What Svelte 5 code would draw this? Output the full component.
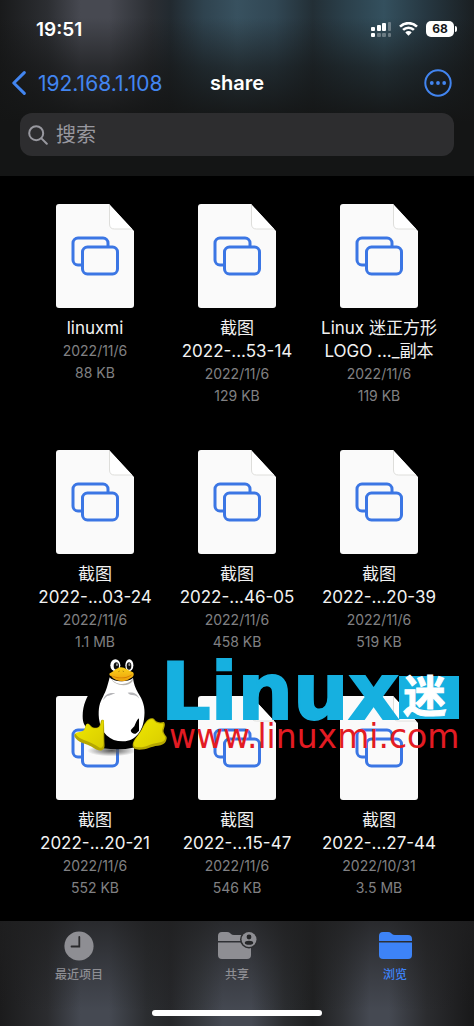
<script>
  let search = $state('');
  let activeTab = $state('browse');

  const files = [
    { name: ['linuxmi'], date: '2022/11/6', size: '88 KB' },
    { name: ['截图', '2022-...53-14'], date: '2022/11/6', size: '129 KB' },
    { name: ['Linux 迷正方形', 'LOGO ..._副本'], date: '2022/11/6', size: '119 KB' },
    { name: ['截图', '2022-...03-24'], date: '2022/11/6', size: '1.1 MB' },
    { name: ['截图', '2022-...46-05'], date: '2022/11/6', size: '458 KB' },
    { name: ['截图', '2022-...20-39'], date: '2022/11/6', size: '519 KB' },
    { name: ['截图', '2022-...20-21'], date: '2022/11/6', size: '552 KB' },
    { name: ['截图', '2022-...15-47'], date: '2022/11/6', size: '546 KB' },
    { name: ['截图', '2022-...27-44'], date: '2022/10/31', size: '3.5 MB' }
  ];

  const tabs = [
    { id: 'recents', label: '最近项目' },
    { id: 'shared', label: '共享' },
    { id: 'browse', label: '浏览' }
  ];
</script>

<div class="screen">
  <header>
    <div class="status">
      <span class="time">19:51</span>
      <div class="indicators">
        <svg width="20" height="15" viewBox="0 0 20 15" fill="#fff" aria-hidden="true">
          <rect x="0" y="5" width="4" height="4" rx="1" />
          <rect x="6" y="3" width="4" height="6" rx="1" />
          <rect x="11" y="1" width="4" height="8" rx="1" />
          <rect x="17" y="0" width="3" height="9" rx="1" opacity=".3" />
          <rect x="0" y="11" width="4" height="4" rx="1" />
          <g opacity=".3">
            <rect x="6" y="11" width="4" height="4" rx="1" />
            <rect x="11" y="11" width="4" height="4" rx="1" />
            <rect x="17" y="11" width="3" height="4" rx="1" />
          </g>
        </svg>
        <svg width="19" height="14" viewBox="0 0 19 14" aria-hidden="true">
          <g fill="none" stroke="#fff" stroke-width="2.6">
            <path d="M1 4.6a12.2 12.2 0 0 1 17 0" />
            <path d="M4.1 7.9a7.7 7.7 0 0 1 10.8 0" />
          </g>
          <path d="M6.3 10.4a4.6 4.6 0 0 1 6.4 0L9.5 13.7z" fill="#fff" />
        </svg>
        <span class="battery">68</span>
      </div>
    </div>

    <nav>
      <button class="back">
        <svg width="14" height="24" viewBox="0 0 14 24" aria-hidden="true">
          <path d="M12.3 1.6 1.8 12l10.5 10.4" fill="none" stroke="currentColor" stroke-width="3" stroke-linecap="round" stroke-linejoin="round" />
        </svg>
        192.168.1.108
      </button>
      <h1>share</h1>
      <button class="more" aria-label="更多">
        <svg width="28" height="28" viewBox="0 0 28 28" fill="currentColor" aria-hidden="true">
          <circle cx="14" cy="14" r="12.7" fill="none" stroke="currentColor" stroke-width="2" />
          <circle cx="7.8" cy="14" r="1.9" />
          <circle cx="14" cy="14" r="1.9" />
          <circle cx="20.2" cy="14" r="1.9" />
        </svg>
      </button>
    </nav>

    <label class="search">
      <svg width="20" height="20" viewBox="0 0 20 20" fill="none" stroke="currentColor" stroke-width="2" stroke-linecap="round" aria-hidden="true">
        <circle cx="8.2" cy="8.2" r="7" />
        <path d="m13.4 13.4 5.4 5.4" />
      </svg>
      <input type="text" placeholder="搜索" aria-label="搜索" bind:value={search} />
    </label>
  </header>

  <main>
    <div class="files">
      {#each files as file}
        <button class="file">
          <svg class="thumb" width="78" height="104" viewBox="0 0 78 104" aria-hidden="true">
            <path d="M3 0h50l25 27v74a3 3 0 0 1-3 3H3a3 3 0 0 1-3-3V3a3 3 0 0 1 3-3z" fill="#fafafa" />
            <path d="M53 0v20q0 5 5 5h18l2 2z" fill="#fff" />
            <path d="M53.5 1v19q0 5 5 5H76" fill="none" stroke="#dededb" stroke-width="1" />
            <g fill="#fafafa" stroke="#3b76e4" stroke-width="3">
              <rect x="17" y="34" width="35" height="27" rx="5" />
              <rect x="26.5" y="43" width="35" height="27" rx="5" />
            </g>
          </svg>
          {#each file.name as line}
            <span class="name">{line}</span>
          {/each}
          <span class="meta">{file.date}</span>
          <span class="meta">{file.size}</span>
        </button>
      {/each}
    </div>

    <div class="watermark">
      <svg width="110" height="110" viewBox="0 0 330 330" aria-hidden="true">
        <defs>
          <linearGradient id="foot" x1="0" y1="0" x2="1" y2="1">
            <stop offset="0" stop-color="#f0e800" />
            <stop offset="1" stop-color="#d8cc00" />
          </linearGradient>
          <linearGradient id="beak" x1="0" y1="0" x2="0" y2="1">
            <stop offset="0" stop-color="#fbd21a" />
            <stop offset="1" stop-color="#eba00c" />
          </linearGradient>
          <radialGradient id="shade">
            <stop offset="0" stop-color="#555" />
            <stop offset="1" stop-color="#555" stop-opacity="0" />
          </radialGradient>
        </defs>
        <ellipse cx="125" cy="302" rx="74" ry="17" fill="url(#shade)" />
        <path d="M118 48c0-32 20-38 36-38s38 5 38 39c0 32 7 52 22 74 18 25 32 57 28 95l-14 68q-13 11-40 7-35 9-90 2l-42-58c-12-6-18-18-18-38 0-34 13-61 27-79 26-28 53-30 53-72z" fill="#000" />
        <path d="M119 82c10 14 54 17 70 2 2 17 7 31 15 44 14 21 22 43 19 70-3 46-27 75-63 76-38 1-68-24-73-68-3-31 2-49 12-66 10-18 14-34 20-58z" fill="#fff" />
        <path d="M99 151c5-17 18-24 37-21-10 2-14 7-20 7-6 0-10 6-17 14zm74-23c16-3 29 2 35 18-8-9-13-11-22-11-7 0-10-5-13-7z" fill="#b5b5b8" />
        <ellipse cx="136" cy="46" rx="15" ry="18" fill="#fff" />
        <ellipse cx="178" cy="46" rx="12" ry="18" fill="#fff" />
        <ellipse cx="139" cy="48" rx="8" ry="11" fill="#111" />
        <ellipse cx="177" cy="48" rx="7" ry="11" fill="#111" />
        <ellipse cx="141" cy="44" rx="3" ry="4" fill="#999" />
        <ellipse cx="178" cy="44" rx="3" ry="4" fill="#999" />
        <path d="M121 80c7 25 55 31 67 5v8c-15 21-54 13-64-5z" fill="#b7b4af" />
        <path d="M119 70c10-2 18-16 32-18 13-1 23 10 38 15 5 6 1 15-8 18-18 15-48 8-57-6-5-1-7-5-5-9z" fill="url(#beak)" />
        <path d="M121 74c19 10 43 13 67-2-9 11-22 13-34 13-14 0-26-4-33-11z" fill="#d87f05" />
        <path d="M145 65l4-2m9 0 4 2" stroke="#8c6506" stroke-width="2" />
        <path d="M207 205c-8 5-9 14-14 24-8 9-15 12-7 19 7 6 13 4 21-6z" fill="#000" />
        <path d="M14 252c10-3 23-4 28-11 6-12 3-18 10-20 7-2 10 12 22 12 14 0 15-4 19-21 1-4 9-3 9 1l1 57c0 14 3 21-3 28-9 9-21 0-35-8-16-9-35-11-47-24-4-4-7-9-4-14z" fill="#b5a700" />
        <path d="M17 249c10-3 22-3 27-11 5-12 3-15 9-16 7 0 7 13 21 13 16 0 18-7 22-23 3-3 5-1 5 3-2 21-3 40-1 60 1 12-3 20-11 18-16-10-31-18-47-23-13-5-26-14-25-21z" fill="url(#foot)" />
        <path d="M188 286c0-14 12-25 20-37 9-13 12-25 20-34 6-7 12-12 20-10 7 2 7 9 16 11 12 4 18-4 20 4 3 10-7 20-2 29 7 13 11 10 6 24-2 7-14 14-24 14-22 2-33 12-56 12-12 0-20-3-20-13z" fill="#b5a700" />
        <path d="M191 282c1-11 12-22 19-33 9-12 11-24 20-33 6-6 11-9 16-8 8 2 7 10 19 12 10 2 14-1 15 3 2 8-8 16-2 26 6 11 10 13 6 20-5 7-14 8-24 10-20 3-31 13-51 13-12 0-18-2-18-10z" fill="url(#foot)" />
      </svg>
      <div class="brand">
        <div class="logo">Linux<span>迷</span></div>
        <div class="site">www.linuxmi.com</div>
      </div>
    </div>
  </main>

  <footer>
    <div class="tabs">
      {#each tabs as tab}
        <button class="tab" class:active={activeTab === tab.id} onclick={() => (activeTab = tab.id)}>
          {#if tab.id === 'recents'}
            <svg width="30" height="30" viewBox="0 0 30 30" aria-hidden="true">
              <circle cx="15" cy="15" r="14.6" fill="currentColor" />
              <path d="M15.3 6v9.5H7.5" fill="none" stroke="#2a2a2c" stroke-width="1.8" stroke-linecap="round" />
            </svg>
          {:else}
            <svg width={tab.id === 'shared' ? 39 : 33} height="30" viewBox={tab.id === 'shared' ? '0 0 39 30' : '0 0 33 30'} aria-hidden="true">
              <path d="M0 10V5q0-4 4-4h5q2 0 3 1l1 1q1 1 3 1h13q4 0 4 4v2z" fill="currentColor" />
              <path d="M0 11.5h33V24q0 4-4 4H4q-4 0-4-4z" fill="currentColor" />
              {#if tab.id === 'shared'}
                <circle cx="31" cy="8.5" r="9" fill="#2c2d2f" />
                <circle cx="31" cy="8.5" r="7.5" fill="currentColor" />
                <circle cx="31" cy="6" r="2.4" fill="#252628" />
                <ellipse cx="31" cy="11.8" rx="4.2" ry="2" fill="#252628" />
              {/if}
            </svg>
          {/if}
          <span>{tab.label}</span>
        </button>
      {/each}
    </div>
    <div class="home"></div>
  </footer>
</div>

<style>
  :global(body) {
    background: #000;
  }

  .screen {
    min-height: 100vh;
    display: flex;
    flex-direction: column;
    background: #000;
    color: #fff;
    font-family: Inter, "Noto Sans CJK SC", sans-serif;
  }

  button {
    padding: 0;
    border: none;
    background: none;
    color: inherit;
    font-family: inherit;
    cursor: pointer;
  }

  svg {
    display: block;
    flex-shrink: 0;
  }

  /* blurred wallpaper: vertical colour bands that fade out downwards */
  header {
    padding: 16px 20px 20px;
    background:
      linear-gradient(rgba(20, 21, 21, 0) 10%, rgba(20, 21, 21, 0.6) 38%, #141515 70%),
      linear-gradient(90deg, #191a1b, #2c2e32 10%, #474951 17%, #474951 23%, #2b2e33 32%, #222a30 36%, #2f434f 43%, #38515f 50%, #314754 58%, #232f36 66%, #2b404b 73%, #34505e 81%, #263741 90%, #1a1f22);
  }

  .status {
    display: flex;
    justify-content: space-between;
    align-items: center;
    height: 26px;
    padding-left: 16px;
  }

  .time {
    font-size: 19px;
    font-weight: 600;
  }

  .indicators {
    display: flex;
    align-items: center;
    gap: 8px;
  }

  .battery {
    position: relative;
    width: 28px;
    border-radius: 5px;
    background: #fff;
    color: #16181a;
    font-size: 12px;
    font-weight: 700;
    line-height: 16px;
    text-align: center;
  }

  .battery::after {
    content: '';
    position: absolute;
    top: 5px;
    right: -3px;
    width: 2px;
    height: 6px;
    border-radius: 0 2px 2px 0;
    background: #fff;
  }

  nav {
    display: grid;
    grid-template-columns: 1fr auto 1fr;
    align-items: center;
    height: 28px;
    margin: 27px -8px 16px;
    color: #4285f0;
  }

  .back {
    display: flex;
    align-items: center;
    gap: 12px;
    font-size: 21px;
  }

  h1 {
    margin: 0;
    color: #fff;
    font-size: 20px;
    font-weight: 600;
  }

  .more {
    justify-self: end;
    margin-right: 10px;
  }

  .search {
    display: flex;
    align-items: center;
    gap: 8px;
    padding: 8px;
    border-radius: 12px;
    background: #2d2d2f;
    color: #98989f;
  }

  .search input {
    flex: 1;
    min-width: 0;
    height: 27px;
    padding: 0;
    border: none;
    outline: none;
    background: none;
    color: #fff;
    font: inherit;
    font-size: 20px;
  }

  .search input::placeholder {
    color: #98989f;
    opacity: 1;
  }

  main {
    position: relative;
    flex: 1;
    padding: 28px 24px 22px;
  }

  .files {
    display: grid;
    grid-template-columns: repeat(3, 1fr);
    row-gap: 43px;
  }

  .file {
    display: flex;
    flex-direction: column;
    align-items: center;
    justify-content: flex-start;
  }

  .thumb {
    margin-bottom: 9px;
  }

  .name {
    color: #f2f2f2;
    font-size: 17px;
    line-height: 23px;
    white-space: nowrap;
  }

  .meta {
    color: #808083;
    font-size: 14px;
    line-height: 22px;
  }

  .watermark {
    position: absolute;
    top: 474px;
    left: 70px;
    display: flex;
    pointer-events: none;
    font-family: "DejaVu Sans", "Noto Sans CJK SC", sans-serif;
    white-space: nowrap;
  }

  .brand {
    margin-left: -19px;
  }

  .logo {
    display: flex;
    align-items: flex-end;
    height: 69px;
    color: #16b0e0;
    font-size: 78px;
    font-weight: 700;
    line-height: 54px;
    -webkit-text-stroke: 2px #16b0e0;
  }

  .logo span {
    width: 52px;
    padding-right: 8px;
    background: #16b0e0;
    color: #fff;
    font-size: 43px;
    line-height: 43px;
    text-align: center;
    -webkit-text-stroke: 1px #fff;
  }

  .site {
    padding-left: 8px;
    color: #e31b23;
    font-size: 33px;
    line-height: 35px;
  }

  footer {
    padding: 10px 0 11px;
    background:
      linear-gradient(rgba(31, 31, 32, 0.75), rgba(31, 31, 32, 0) 85%),
      linear-gradient(90deg, #1b1b1c, #2b2c2f 10%, #454952 17%, #454952 23%, #2b2d30 31%, #26272a 36%, #36393e 42%, #454952 47%, #454952 53%, #2b2d30 60%, #1f2021 66%, #303236 72%, #454952 78%, #454952 82%, #2b2c2f 90%, #181819);
  }

  .tabs {
    display: flex;
  }

  .tab {
    flex: 1;
    display: flex;
    flex-direction: column;
    align-items: center;
    gap: 5px;
    color: #8e8e93;
    font-size: 12px;
    font-weight: 500;
    line-height: 18px;
  }

  .tab.active {
    color: #3d83f7;
  }

  .home {
    width: 36%;
    height: 6px;
    margin: 26px auto 0;
    border-radius: 3px;
    background: #fff;
  }
</style>
